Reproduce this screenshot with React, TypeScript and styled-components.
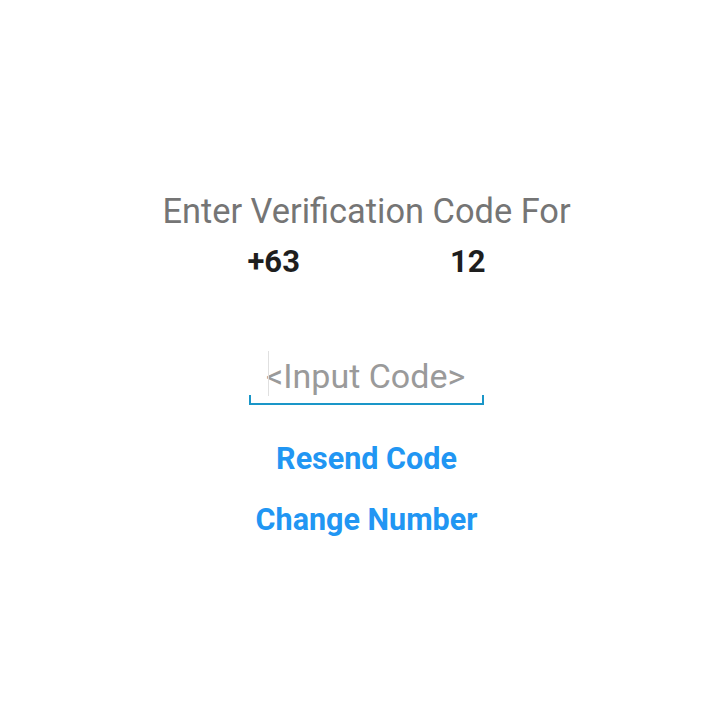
import React from "react";
import styled, { createGlobalStyle } from "styled-components";

const Global = createGlobalStyle`
  html, body { margin: 0; padding: 0; background: #ffffff; }
  body { font-family: Roboto, "Noto Sans", sans-serif; }
`;

const Page = styled.div`
  width: 720px;
  height: 720px;
  display: flex;
  flex-direction: column;
  align-items: center;
  padding-top: 191px;
  padding-left: 13px;
  box-sizing: border-box;
`;

const Title = styled.div`
  font-size: 34.4px;
  line-height: 40px;
  color: #757575;
`;

const Phone = styled.div`
  margin-top: 13px;
  display: flex;
  font-size: 31px;
  line-height: 36px;
  font-weight: 700;
  color: #1e1e1e;
`;

const PhoneGap = styled.span`
  display: inline-block;
  width: ${(p: { $w: number }) => p.$w}px;
`;

const Field = styled.div`
  margin-top: 69px;
  width: 235px;
  height: 56px;
  position: relative;
  box-sizing: border-box;
  display: flex;
  align-items: flex-end;
  padding-left: 17px;
  padding-bottom: 7px;
  border-bottom: 2px solid #1a96c8;
  &::before, &::after {
    content: "";
    position: absolute;
    bottom: 0;
    width: 2px;
    height: 8px;
    background: #1a96c8;
  }
  &::before { left: 0; }
  &::after { right: 0; }
`;

const Cursor = styled.span`
  position: absolute;
  left: 19px;
  top: 2px;
  width: 1px;
  height: 45px;
  background: #e0e0e0;
`;

const Placeholder = styled.span`
  font-size: 34px;
  line-height: 40px;
  color: #9a9a9a;
`;

const LinkButton = styled.div`
  font-size: 30.5px;
  line-height: 36px;
  font-weight: 700;
  color: #2196f3;
  margin-top: ${(p: { $mt: number }) => p.$mt}px;
`;

export default function App() {
  return (
    <>
      <Global />
      <Page>
        <Title>Enter Verification Code For</Title>
        <Phone>
          <span>+63</span>
          <PhoneGap $w={150} />
          <span>12</span>
        </Phone>
        <Field>
          <Cursor />
          <Placeholder>&lt;Input Code&gt;</Placeholder>
        </Field>
        <LinkButton $mt={36}>Resend Code</LinkButton>
        <LinkButton $mt={25}>Change Number</LinkButton>
      </Page>
    </>
  );
}
